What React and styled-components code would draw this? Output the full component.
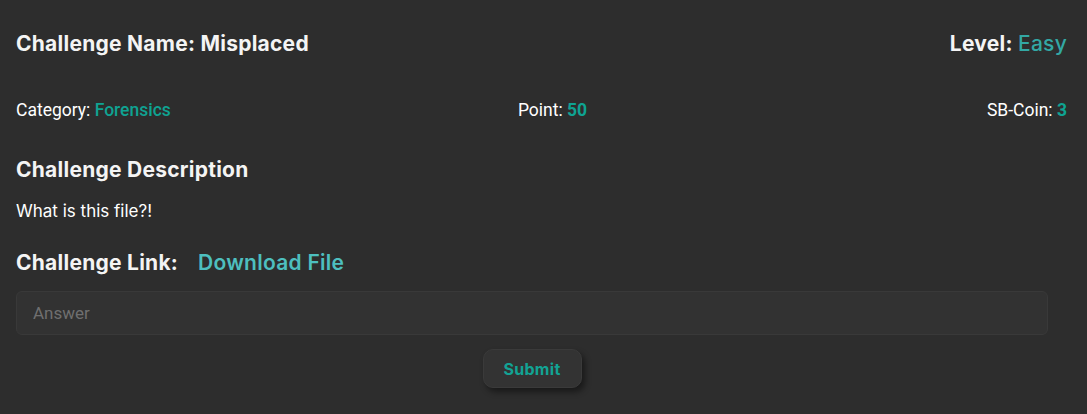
import React from 'react';
import styled, { createGlobalStyle } from 'styled-components';

const GlobalStyle = createGlobalStyle`
    body {
        margin: 0;
        background: #2d2d2d;
        font-family: Roboto, 'Liberation Sans', sans-serif;
        color: #ffffff;
    }
`;

const Page = styled.div`
    min-height: 414px;
    padding: 30px 20px 0 16px;
    box-sizing: border-box;
`;

const HeaderRow = styled.div`
    display: flex;
    justify-content: space-between;
    align-items: center;
    height: 28px;
`;

const Heading = styled.h2`
    margin: 0;
    font-family: Inter, 'Noto Sans', sans-serif;
    font-size: 21px;
    line-height: 28px;
    font-weight: 700;
    color: #f4f4f4;
    letter-spacing: 0.25px;
`;

const Accent = styled.span`
    color: ${(p) => p.color || '#0fa392'};
    font-weight: ${(p) => p.weight || 500};
    margin-left: ${(p) => p.gap || 0}px;
`;

const MetaRow = styled.div`
    display: grid;
    grid-template-columns: 1fr 1fr 1fr;
    align-items: center;
    margin-top: 42px;
    font-size: 17.5px;
    & > :nth-child(2) {
        justify-self: center;
        padding-left: 22px;
    }
    & > :last-child {
        justify-self: end;
    }
`;

const Section = styled.div`
    margin-top: ${(p) => p.top}px;
`;

const Paragraph = styled.p`
    margin: 17px 0 0;
    font-family: Inter, 'Noto Sans', sans-serif;
    font-size: 17px;
`;

const AnswerInput = styled.input`
    display: block;
    width: 1032px;
    height: 44px;
    margin-top: 14px;
    padding: 0 16px;
    box-sizing: border-box;
    background: #323232;
    border: 1px solid #393939;
    border-radius: 6px;
    color: #ffffff;
    font-family: Roboto, 'Liberation Sans', sans-serif;
    font-size: 17px;
    outline: none;
    &::placeholder {
        color: #6f6f6f;
    }
`;

const Actions = styled.div`
    display: flex;
    justify-content: center;
    width: 1032px;
    margin-top: 14px;
`;

const SubmitButton = styled.button`
    width: 99px;
    height: 39px;
    background: #333333;
    border: 1px solid #3a3a3a;
    border-radius: 10px;
    box-shadow: 3px 4px 6px rgba(0, 0, 0, 0.45);
    color: #12a394;
    font-family: Inter, 'Noto Sans', sans-serif;
    font-size: 16px;
    font-weight: 700;
    letter-spacing: 0.3px;
    cursor: pointer;
`;

export default function App() {
    return (
        <>
            <GlobalStyle />
            <Page>
                <HeaderRow>
                    <Heading>Challenge Name: Misplaced</Heading>
                    <Heading>
                        Level: <Accent color="#33a8a4" weight={500}>Easy</Accent>
                    </Heading>
                </HeaderRow>

                <MetaRow>
                    <span>
                        Category: <Accent>Forensics</Accent>
                    </span>
                    <span>
                        Point: <Accent weight={700}>50</Accent>
                    </span>
                    <span>
                        SB-Coin: <Accent weight={700}>3</Accent>
                    </span>
                </MetaRow>

                <Section top={36}>
                    <Heading>Challenge Description</Heading>
                    <Paragraph>What is this file?!</Paragraph>
                </Section>

                <Section top={28}>
                    <Heading>
                        Challenge Link:
                        <Accent color="#4dbfbf" weight={600} gap={20}>
                            Download File
                        </Accent>
                    </Heading>
                </Section>

                <AnswerInput placeholder="Answer" />
                <Actions>
                    <SubmitButton>Submit</SubmitButton>
                </Actions>
            </Page>
        </>
    );
}
